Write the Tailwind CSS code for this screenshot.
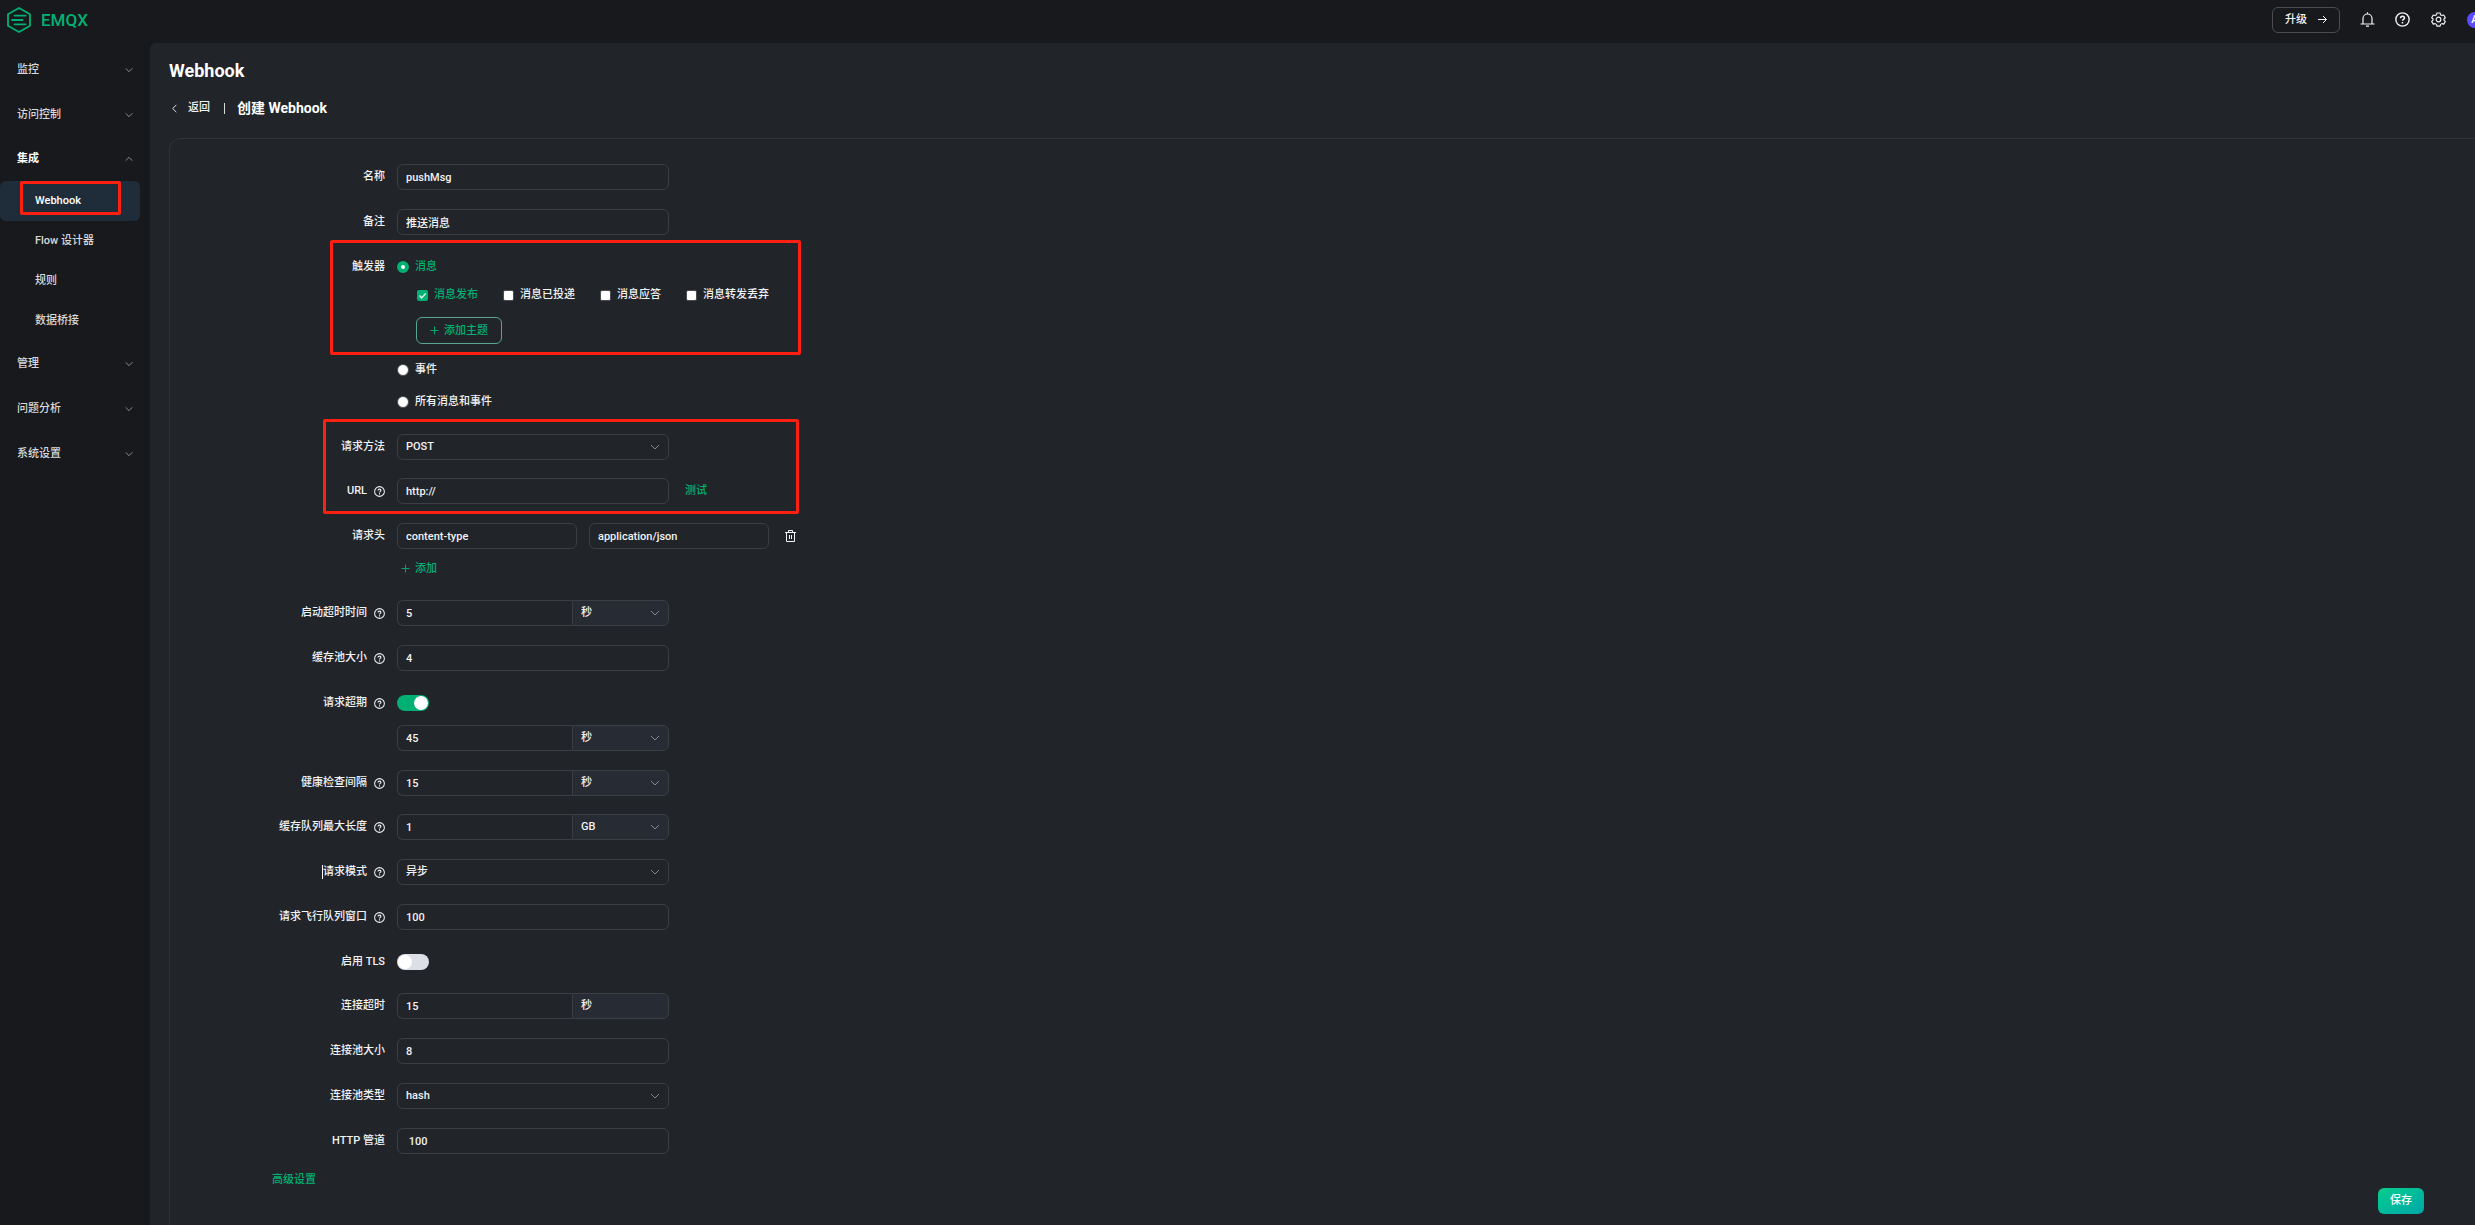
<!DOCTYPE html>
<html lang="zh-CN">
<head>
    <meta charset="UTF-8">
    <meta name="viewport" content="width=device-width, initial-scale=1.0">
    <title>EMQX Dashboard - Webhook</title>
    <script src="https://cdn.jsdelivr.net/npm/@tailwindcss/browser@4"></script>
</head>
<body class="min-h-screen flex flex-col overflow-x-hidden bg-[#18191c] text-[#f2f3f5] text-[11px] leading-4 font-medium font-['Roboto','Noto_Sans_CJK_SC',sans-serif]">
    <!-- Icons -->
    <svg class="hidden" aria-hidden="true">
        <symbol id="i-down" viewBox="0 0 12 12"><path d="M2 4l4 4 4-4" fill="none" stroke="currentColor" stroke-width="1"/></symbol>
        <symbol id="i-up" viewBox="0 0 12 12"><path d="M2 8l4-4 4 4" fill="none" stroke="currentColor" stroke-width="1"/></symbol>
        <symbol id="i-left" viewBox="0 0 12 12"><path d="M8 2L4 6l4 4" fill="none" stroke="currentColor" stroke-width="1"/></symbol>
        <symbol id="i-plus" viewBox="0 0 10 10"><path d="M5 .5v9M.5 5h9" fill="none" stroke="currentColor" stroke-width="1"/></symbol>
        <symbol id="i-help" viewBox="0 0 16 16"><circle cx="8" cy="8" r="7.1" fill="none" stroke="currentColor" stroke-width="1.5"/><path d="M5.9 6.6c0-1.3.9-2.1 2.1-2.1s2.1.8 2.1 1.9c0 1.4-2.1 1.5-2.1 3M8 10.7v1.5" fill="none" stroke="currentColor" stroke-width="1.6"/></symbol>
    </svg>

    <header class="flex items-center h-[43px] pl-[7px] pb-1 overflow-hidden shrink-0">
        <a href="#" class="flex items-center gap-[10px] text-[#00b173] text-[17px]">
            <svg class="w-6 h-[26px]" viewBox="0 0 24 26" fill="none" stroke="currentColor" stroke-width="1.8" stroke-linejoin="round">
                <path d="M12 1l11 6.2v11.6L12 25 1 18.800V7.200z"/>
                <path d="M7.500 8.700h11M5 13h10.500M7.500 17.300h11" stroke-linecap="round"/>
            </svg>
            <span>EMQX</span>
        </a>
        <div class="ml-auto flex items-center">
            <button class="flex items-center justify-between w-[68px] h-[26px] px-3 border border-[#4a4c50] rounded-md">
                <span>升级</span>
                <svg class="w-[9px] h-[9px]" viewBox="0 0 9 9" fill="none" stroke="currentColor"><path d="M0 4.500h8M5 1l3.500 3.500L5 8"/></svg>
            </button>
            <button class="ml-5" aria-label="通知">
                <svg class="w-[15px] h-[15px]" viewBox="0 0 15 15" fill="none" stroke="currentColor" stroke-width="1.2">
                    <path d="M3 12V6.500a4.500 4.500 0 0 1 9 0V12M.5 12h14M7.500 .3v1.700M6 14.200h3"/>
                </svg>
            </button>
            <button class="ml-5" aria-label="帮助"><svg class="w-[15px] h-[15px]"><use href="#i-help"/></svg></button>
            <button class="ml-[21px]" aria-label="设置">
                <svg class="w-[15px] h-[15px]" viewBox="0 0 16 16" fill="none" stroke="currentColor" stroke-width="1.2" stroke-linejoin="round">
                    <path d="M6.300 1h3.400l.5 2 1.400.8 2-.6 1.700 2.900-1.500 1.400v1.200l1.500 1.300-1.700 2.900-2-.5-1.400.8-.5 1.900H6.300l-.5-1.900-1.400-.8-2 .5L.7 10l1.500-1.300V7.500L.7 6.100l1.700-2.900 2 .6L5.800 3z"/>
                    <circle cx="8" cy="8" r="2.500"/>
                </svg>
            </button>
            <button class="ml-[21px] -mr-2 w-4 h-4 rounded-full bg-[#5b4cff] text-white text-center">A</button>
        </div>
    </header>

    <div class="flex flex-1">
        <aside class="w-[150px] shrink-0 pt-1 text-[#d8d9db]">
            <nav>
                <a href="#" class="flex items-center justify-between h-[45px] pl-[17px] pr-4"><span>监控</span><svg class="w-[10px] h-[10px] text-[#a0a2a6]"><use href="#i-down"/></svg></a>
                <a href="#" class="flex items-center justify-between h-[45px] pl-[17px] pr-4"><span>访问控制</span><svg class="w-[10px] h-[10px] text-[#a0a2a6]"><use href="#i-down"/></svg></a>
                <a href="#" class="flex items-center justify-between h-11 pl-[17px] pr-4 font-bold text-white"><span>集成</span><svg class="w-[10px] h-[10px] text-[#a0a2a6]"><use href="#i-up"/></svg></a>
                <a href="#" class="relative flex items-center h-10 pl-[35px] mr-[10px] rounded-md bg-[#1f2d3a] text-white">
                    Webhook
                    <span class="absolute left-5 top-0 w-[101px] h-[34px] border-3 border-[#ff2012] rounded-xs"></span>
                </a>
                <a href="#" class="flex items-center h-10 pl-[35px]">Flow 设计器</a>
                <a href="#" class="flex items-center h-10 pl-[35px]">规则</a>
                <a href="#" class="flex items-center h-10 pl-[35px]">数据桥接</a>
                <a href="#" class="flex items-center justify-between h-[45px] pl-[17px] pr-4"><span>管理</span><svg class="w-[10px] h-[10px] text-[#a0a2a6]"><use href="#i-down"/></svg></a>
                <a href="#" class="flex items-center justify-between h-[45px] pl-[17px] pr-4"><span>问题分析</span><svg class="w-[10px] h-[10px] text-[#a0a2a6]"><use href="#i-down"/></svg></a>
                <a href="#" class="flex items-center justify-between h-[45px] pl-[17px] pr-4"><span>系统设置</span><svg class="w-[10px] h-[10px] text-[#a0a2a6]"><use href="#i-down"/></svg></a>
            </nav>
        </aside>

        <main class="flex-1 flex flex-col bg-[#212429] rounded-tl-md pl-[19px] pt-4">
            <h1 class="text-lg leading-6 font-bold text-white">Webhook</h1>
            <div class="flex items-center h-6 mt-[13px] mb-[18px]">
                <a href="#" class="flex items-center gap-2"><svg class="w-[11px] h-[11px]"><use href="#i-left"/></svg>返回</a>
                <span class="w-px h-[11px] ml-[14px] mr-3 bg-[#d8d9db]"></span>
                <h2 class="text-sm font-bold text-white">创建 Webhook</h2>
            </div>

            <form class="flex-1 border-l border-t border-[#2f3237] rounded-tl-xl pt-[25px]">
                <div class="flex items-center gap-3 mb-[19px]">
                    <label for="name" class="w-[215px] text-right">名称</label>
                    <input id="name" type="text" value="pushMsg" class="w-[272px] h-[26px] px-2 border border-[#3b3e43] rounded-md">
                </div>
                <div class="flex items-center gap-3 mb-[19px]">
                    <label for="remark" class="w-[215px] text-right">备注</label>
                    <input id="remark" type="text" value="推送消息" class="w-[272px] h-[26px] px-2 border border-[#3b3e43] rounded-md">
                </div>

                <!-- Trigger -->
                <div class="relative flex gap-3">
                    <span class="w-[215px] leading-[25px] text-right">触发器</span>
                    <div>
                        <label class="flex items-center gap-[6px] h-[25px] text-[#00b173]">
                            <input type="radio" name="trigger" checked class="appearance-none w-3 h-3 rounded-full bg-white border-4 border-[#00b173]">消息
                        </label>
                        <div class="flex items-center gap-[25px] h-8 pl-5">
                            <label class="flex items-center gap-[6px] text-[#00b173]">
                                <span class="grid">
                                    <input type="checkbox" checked class="col-start-1 row-start-1 appearance-none w-[11px] h-[11px] rounded-xs bg-[#00b173]">
                                    <svg class="col-start-1 row-start-1 w-[11px] h-[11px] pointer-events-none" viewBox="0 0 11 11" fill="none" stroke="#d9f5ea" stroke-width="1.5"><path d="M2.500 5.500l2 2.300 4.200-4.300"/></svg>
                                </span>消息发布
                            </label>
                            <label class="flex items-center gap-[6px]"><input type="checkbox" class="appearance-none w-[11px] h-[11px] rounded-xs bg-white border border-[#4a4c50]">消息已投递</label>
                            <label class="flex items-center gap-[6px]"><input type="checkbox" class="appearance-none w-[11px] h-[11px] rounded-xs bg-white border border-[#4a4c50]">消息应答</label>
                            <label class="flex items-center gap-[6px]"><input type="checkbox" class="appearance-none w-[11px] h-[11px] rounded-xs bg-white border border-[#4a4c50]">消息转发丢弃</label>
                        </div>
                        <button type="button" class="flex items-center justify-center gap-[5px] w-[86px] h-[27px] ml-[19px] mt-[6px] border border-[#58a692] rounded-md text-[#00b173]">
                            <svg class="w-[9px] h-[9px]"><use href="#i-plus"/></svg>添加主题
                        </button>
                    </div>
                    <span class="absolute left-[160px] -top-[14px] w-[471px] h-[115px] border-3 border-[#ff2012] rounded-xs pointer-events-none"></span>
                </div>
                <div class="mt-[10px] mb-4 pl-[227px]">
                    <label class="flex items-center gap-[6px] h-8"><input type="radio" name="trigger" class="appearance-none w-3 h-3 rounded-full bg-white border border-[#4a4c50]">事件</label>
                    <label class="flex items-center gap-[6px] h-8"><input type="radio" name="trigger" class="appearance-none w-3 h-3 rounded-full bg-white border border-[#4a4c50]">所有消息和事件</label>
                </div>

                <!-- Request -->
                <div class="relative">
                    <div class="flex items-center gap-3 mb-[18px]">
                        <label for="method" class="w-[215px] text-right">请求方法</label>
                        <div class="relative w-[272px]">
                            <select id="method" class="appearance-none w-full h-[26px] px-2 border border-[#3b3e43] rounded-md"><option>POST</option></select>
                            <svg class="absolute right-2 top-[7px] w-3 h-3 text-[#85878c] pointer-events-none"><use href="#i-down"/></svg>
                        </div>
                    </div>
                    <div class="flex items-center gap-3 mb-[19px]">
                        <label for="url" class="flex items-center justify-end gap-[7px] w-[215px]">URL<svg class="w-[11px] h-[11px]"><use href="#i-help"/></svg></label>
                        <input id="url" type="text" value="http://" class="w-[272px] h-[26px] px-2 border border-[#3b3e43] rounded-md">
                        <button type="button" class="ml-1 text-[#00b173]">测试</button>
                    </div>
                    <span class="absolute left-[153px] -top-[15px] w-[476px] h-[95px] border-3 border-[#ff2012] rounded-xs pointer-events-none"></span>
                </div>
                <div class="flex items-center gap-3">
                    <label for="header-key" class="w-[215px] text-right">请求头</label>
                    <input id="header-key" type="text" value="content-type" class="w-[180px] h-[26px] px-2 border border-[#3b3e43] rounded-md">
                    <input type="text" value="application/json" aria-label="请求头值" class="w-[180px] h-[26px] px-2 border border-[#3b3e43] rounded-md">
                    <button type="button" aria-label="删除" class="ml-1">
                        <svg class="w-[11px] h-3" viewBox="0 0 11 12" fill="none" stroke="currentColor"><path d="M0 2.500h11M3.500 2.500v-2h4v2M1.500 2.500v9h8v-9M4.500 5v4M6.500 5v4"/></svg>
                    </button>
                </div>
                <div class="h-[25px] mt-[7px] mb-[19px] pl-[231px] flex">
                    <button type="button" class="flex items-center gap-[5px] text-[#00b173]"><svg class="w-[9px] h-[9px]"><use href="#i-plus"/></svg>添加</button>
                </div>

                <!-- Resource options -->
                <div class="flex items-center gap-3 mb-[19px]">
                    <label for="start-timeout" class="flex items-center justify-end gap-[7px] w-[215px]">启动超时时间<svg class="w-[11px] h-[11px]"><use href="#i-help"/></svg></label>
                    <div class="flex w-[272px]">
                        <input id="start-timeout" type="text" value="5" class="w-[175px] h-[26px] px-2 border border-r-0 border-[#3b3e43] rounded-l-md">
                        <div class="relative flex-1">
                            <select aria-label="单位" class="appearance-none w-full h-[26px] px-2 bg-[#272b33] border border-[#3b3e43] rounded-r-md"><option>秒</option></select>
                            <svg class="absolute right-2 top-[7px] w-3 h-3 text-[#85878c] pointer-events-none"><use href="#i-down"/></svg>
                        </div>
                    </div>
                </div>
                <div class="flex items-center gap-3 mb-[19px]">
                    <label for="pool" class="flex items-center justify-end gap-[7px] w-[215px]">缓存池大小<svg class="w-[11px] h-[11px]"><use href="#i-help"/></svg></label>
                    <input id="pool" type="text" value="4" class="w-[272px] h-[26px] px-2 border border-[#3b3e43] rounded-md">
                </div>
                <div class="flex items-center gap-3 h-[26px] mb-[9px]">
                    <label for="ttl" class="flex items-center justify-end gap-[7px] w-[215px]">请求超期<svg class="w-[11px] h-[11px]"><use href="#i-help"/></svg></label>
                    <input id="ttl" type="checkbox" role="switch" checked class="appearance-none w-8 h-4 rounded-full bg-[#00b173] p-px flex justify-end before:w-[14px] before:h-[14px] before:rounded-full before:bg-white">
                </div>
                <div class="mb-[19px] pl-[227px]">
                    <div class="flex w-[272px]">
                        <input type="text" value="45" aria-label="请求超期" class="w-[175px] h-[26px] px-2 border border-r-0 border-[#3b3e43] rounded-l-md">
                        <div class="relative flex-1">
                            <select aria-label="单位" class="appearance-none w-full h-[26px] px-2 bg-[#272b33] border border-[#3b3e43] rounded-r-md"><option>秒</option></select>
                            <svg class="absolute right-2 top-[7px] w-3 h-3 text-[#85878c] pointer-events-none"><use href="#i-down"/></svg>
                        </div>
                    </div>
                </div>
                <div class="flex items-center gap-3 mb-[18px]">
                    <label for="health" class="flex items-center justify-end gap-[7px] w-[215px]">健康检查间隔<svg class="w-[11px] h-[11px]"><use href="#i-help"/></svg></label>
                    <div class="flex w-[272px]">
                        <input id="health" type="text" value="15" class="w-[175px] h-[26px] px-2 border border-r-0 border-[#3b3e43] rounded-l-md">
                        <div class="relative flex-1">
                            <select aria-label="单位" class="appearance-none w-full h-[26px] px-2 bg-[#272b33] border border-[#3b3e43] rounded-r-md"><option>秒</option></select>
                            <svg class="absolute right-2 top-[7px] w-3 h-3 text-[#85878c] pointer-events-none"><use href="#i-down"/></svg>
                        </div>
                    </div>
                </div>
                <div class="flex items-center gap-3 mb-[19px]">
                    <label for="queue" class="flex items-center justify-end gap-[7px] w-[215px]">缓存队列最大长度<svg class="w-[11px] h-[11px]"><use href="#i-help"/></svg></label>
                    <div class="flex w-[272px]">
                        <input id="queue" type="text" value="1" class="w-[175px] h-[26px] px-2 border border-r-0 border-[#3b3e43] rounded-l-md">
                        <div class="relative flex-1">
                            <select aria-label="单位" class="appearance-none w-full h-[26px] px-2 bg-[#272b33] border border-[#3b3e43] rounded-r-md"><option>GB</option></select>
                            <svg class="absolute right-2 top-[7px] w-3 h-3 text-[#85878c] pointer-events-none"><use href="#i-down"/></svg>
                        </div>
                    </div>
                </div>
                <div class="flex items-center gap-3 mb-[19px]">
                    <label for="mode" class="flex items-center justify-end gap-[7px] w-[215px]"><span class="border-l border-white leading-[14px]">请求模式</span><svg class="w-[11px] h-[11px]"><use href="#i-help"/></svg></label>
                    <div class="relative w-[272px]">
                        <select id="mode" class="appearance-none w-full h-[26px] px-2 border border-[#3b3e43] rounded-md"><option>异步</option></select>
                        <svg class="absolute right-2 top-[7px] w-3 h-3 text-[#85878c] pointer-events-none"><use href="#i-down"/></svg>
                    </div>
                </div>
                <div class="flex items-center gap-3 mb-[19px]">
                    <label for="inflight" class="flex items-center justify-end gap-[7px] w-[215px]">请求飞行队列窗口<svg class="w-[11px] h-[11px]"><use href="#i-help"/></svg></label>
                    <input id="inflight" type="text" value="100" class="w-[272px] h-[26px] px-2 border border-[#3b3e43] rounded-md">
                </div>

                <!-- Connection -->
                <div class="flex items-center gap-3 h-[26px] mb-[18px]">
                    <label for="tls" class="w-[215px] text-right">启用 TLS</label>
                    <input id="tls" type="checkbox" role="switch" class="appearance-none w-8 h-4 rounded-full bg-[#dcdfe6] p-px flex before:w-[14px] before:h-[14px] before:rounded-full before:bg-white">
                </div>
                <div class="flex items-center gap-3 mb-[19px]">
                    <label for="conn-timeout" class="w-[215px] text-right">连接超时</label>
                    <div class="flex w-[272px]">
                        <input id="conn-timeout" type="text" value="15" class="w-[175px] h-[26px] px-2 border border-r-0 border-[#3b3e43] rounded-l-md">
                        <span class="flex-1 flex items-center h-[26px] px-2 bg-[#272b33] border border-[#3b3e43] rounded-r-md">秒</span>
                    </div>
                </div>
                <div class="flex items-center gap-3 mb-[19px]">
                    <label for="conn-pool" class="w-[215px] text-right">连接池大小</label>
                    <input id="conn-pool" type="text" value="8" class="w-[272px] h-[26px] px-2 border border-[#3b3e43] rounded-md">
                </div>
                <div class="flex items-center gap-3 mb-[19px]">
                    <label for="pool-type" class="w-[215px] text-right">连接池类型</label>
                    <div class="relative w-[272px]">
                        <select id="pool-type" class="appearance-none w-full h-[26px] px-2 border border-[#3b3e43] rounded-md"><option>hash</option></select>
                        <svg class="absolute right-2 top-[7px] w-3 h-3 text-[#85878c] pointer-events-none"><use href="#i-down"/></svg>
                    </div>
                </div>
                <div class="flex items-center gap-3 mb-[18px]">
                    <label for="pipelining" class="w-[215px] text-right">HTTP 管道</label>
                    <input id="pipelining" type="text" value=" 100" class="w-[272px] h-[26px] px-2 border border-[#3b3e43] rounded-md">
                </div>
                <a href="#" class="ml-[102px] text-[#00b173]">高级设置</a>
                <div class="flex justify-end pr-[51px] pb-[10px]">
                    <button type="submit" class="w-[46px] h-[26px] rounded-md bg-linear-to-br from-[#0ace8c] to-[#02a7a8] text-white">保存</button>
                </div>
            </form>
        </main>
    </div>
</body>
</html>
